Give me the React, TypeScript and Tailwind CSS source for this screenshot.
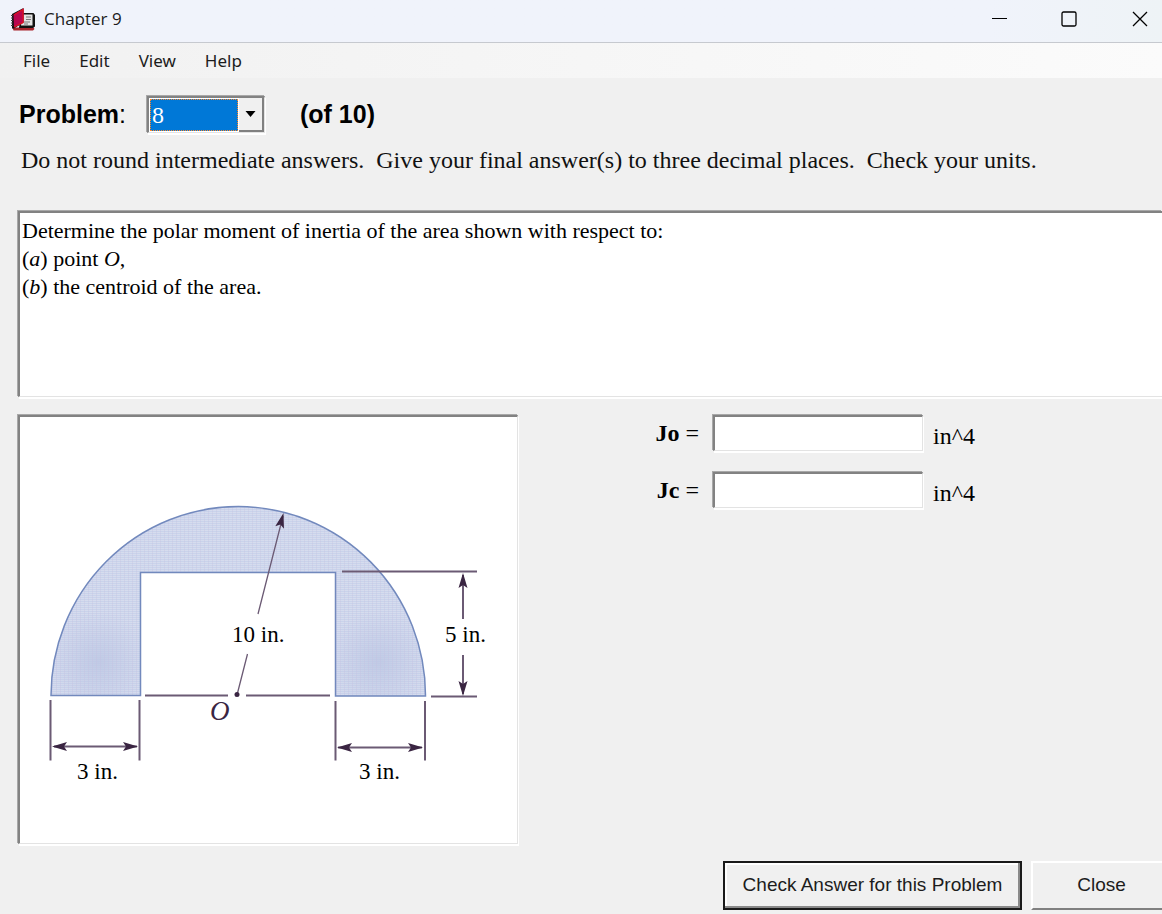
import type { ReactNode } from "react";

const MENU = ["File", "Edit", "View", "Help"];

const ANSWERS = [
  { id: "jo", label: "Jo", unit: "in^4" },
  { id: "jc", label: "Jc", unit: "in^4" },
];

const SUNKEN =
  "border-t-2 border-l-2 border-b border-[#828282] border-b-[#e3e3e3] bg-white shadow-[-1px_-1px_0_#a8a8a8,1px_2px_0_#ffffff]";

function BookIcon() {
  return (
    <svg viewBox="0 0 26 24" className="h-6 w-[26px]" aria-hidden="true">
      <path d="M1.500 20.500h21l1 1.500-1.500 1.500H2.500z" fill="#a8242c" />
      <path d="M10 6h12.500l1.500 2v11.500l-2 1.500H8z" fill="#111" />
      <path d="M12 7.500h9.500v11H10z" fill="#e4e4e4" />
      <path d="M15 10h5M15 12.500h5M13 15h6M13 17h4" stroke="#777" strokeWidth="1" />
      <path d="M1 7l11.500-6v14.500L3 21.500H1z" fill="#111" />
      <path d="M0 8.500h2M0 11h2M0 13.500h2M0 16h2M0 18.500h2" stroke="#444" />
      <path d="M2.500 7.500L12.500 1.500v14L3 20.500z" fill="#b8064e" />
      <path d="M3 8L12 2.500v13L3 20" fill="none" stroke="#e01020" strokeWidth="1.300" />
    </svg>
  );
}

function TitleBar() {
  return (
    <header className="flex h-[43px] items-center justify-between border-b border-[#c6c9cf] bg-linear-to-r from-[#f0f3fb] from-85% to-[#eef3f6] pl-[11px]">
      <div className="flex items-center gap-[7px] pb-1">
        <BookIcon />
        <h1 className="font-['Open_Sans',sans-serif] text-[17px] leading-6 text-[#1b1b1b]">Chapter 9</h1>
      </div>
      <div className="flex pb-1 text-black">
        <button aria-label="Minimize" className="flex h-9 w-[68px] items-center justify-center">
          <svg viewBox="0 0 16 16" className="h-4 w-4" fill="none" stroke="currentColor">
            <path d="M0 7.500h15" />
          </svg>
        </button>
        <button aria-label="Maximize" className="flex h-9 w-[70px] items-center justify-center">
          <svg viewBox="0 0 16 16" className="h-4 w-4" fill="none" stroke="currentColor" strokeWidth="1.300">
            <rect x="1" y="1" width="14" height="14" rx="1.500" />
          </svg>
        </button>
        <button aria-label="Close window" className="flex h-9 w-[58px] items-center justify-center pl-[14px]">
          <svg viewBox="0 0 16 16" className="h-4 w-4" fill="none" stroke="currentColor" strokeWidth="1.300">
            <path d="M1 1l14 14M15 1L1 15" />
          </svg>
        </button>
      </div>
    </header>
  );
}

function MenuBar() {
  return (
    <nav className="flex h-[35px] items-center gap-[29px] bg-linear-to-r from-[#f1f1f1] to-[#fbfbfb] pl-[23px] font-['Noto_Sans',sans-serif] text-[17px] text-[#1c1c1c]">
      {MENU.map((item) => (
        <button key={item}>{item}</button>
      ))}
    </nav>
  );
}

function ProblemPicker() {
  return (
    <div className="flex h-[39px] items-center pl-[19px] font-['Liberation_Sans',Arial,sans-serif] text-[25px] text-black">
      <label htmlFor="problem" className="w-[128px] font-bold">
        Problem<span className="font-normal">:</span>
      </label>
      <div className={`relative h-[37px] w-[118px] border-r border-r-[#e3e3e3] p-px ${SUNKEN}`}>
        <select
          id="problem"
          defaultValue="8"
          className="block h-full w-[88px] appearance-none border border-dotted border-[#ff8728] bg-[#0078d7] pl-px font-['Liberation_Serif','Times_New_Roman',serif] text-[24px] leading-7 text-white outline-none"
        >
          {Array.from({ length: 10 }, (_, i) => (
            <option key={i} value={i + 1}>
              {i + 1}
            </option>
          ))}
        </select>
        <span className="pointer-events-none absolute inset-y-0 right-0 flex w-[25px] items-center justify-center border-r-2 border-b-2 border-[#808080] bg-[#f0f0f0]">
          <svg viewBox="0 0 10 6" className="h-[6px] w-[11px]" aria-hidden="true">
            <path d="M0 0h10L5 6z" />
          </svg>
        </span>
      </div>
      <span className="pl-[35px] font-bold">(of 10)</span>
    </div>
  );
}

function Arrow({ x, y, angle }: { x: number; y: number; angle: number }) {
  return <path d="M0 0L-15 -4.500L-12 0L-15 4.500z" fill="#3a2542" transform={`translate(${x} ${y}) rotate(${angle})`} />;
}

function Note({ x, y, children }: { x: number; y: number; children: ReactNode }) {
  return (
    <text x={x} y={y} fontSize="23" fill="#000">
      {children}
    </text>
  );
}

function Figure() {
  const area = "M31 278.500A187 189 0 0 1 405.500 279H315.500V155.500H120.500V278.500Z";

  return (
    <svg
      viewBox="0 0 497 426"
      className="w-full font-['Liberation_Serif','Times_New_Roman',serif]"
      role="img"
      aria-label="Half disk of radius 10 in. with a rectangular cut-out, 5 in. high"
    >
      <defs>
        <pattern id="weave" width="4" height="4" patternUnits="userSpaceOnUse">
          <path d="M0 .5h4M0 2.500h4" stroke="#b9c8e6" strokeWidth="1" opacity=".45" />
          <path d="M.5 0v4" stroke="#c3bddd" strokeWidth="1" opacity=".3" />
        </pattern>
        <radialGradient id="shade">
          <stop offset="0" stopColor="#b4bfdf" stopOpacity=".6" />
          <stop offset="1" stopColor="#b4bfdf" stopOpacity="0" />
        </radialGradient>
        <clipPath id="area">
          <path d={area} />
        </clipPath>
      </defs>

      <path d={area} fill="#d6dcee" />
      <g clipPath="url(#area)">
        <circle cx="78" cy="245" r="52" fill="url(#shade)" />
        <circle cx="358" cy="245" r="52" fill="url(#shade)" />
      </g>
      <path d={area} fill="url(#weave)" stroke="#7289bd" strokeWidth="1.500" />

      <g stroke="#6b5a74" strokeWidth="2">
        <path d="M125 278.500H208M226 278.500H310" />
        <path d="M322 154.500H457M411 279.500H457" />
        <path d="M443 158V202M443 238V277" />
        <path d="M30.500 283V343.500M119.500 283V343.500M315.500 284V343.500M405 284V343.500" />
        <path d="M34 329.500H117M318 330.500H402" />
      </g>
      <path d="M217 278L227.500 237M238 197L263 99" stroke="#6b5a74" strokeWidth="1.300" />
      <circle cx="217" cy="277.500" r="2.500" fill="#3a2542" />

      <Arrow x={263.5} y={96} angle={-75} />
      <Arrow x={443} y={156} angle={-90} />
      <Arrow x={443} y={279} angle={90} />
      <Arrow x={32} y={329.5} angle={180} />
      <Arrow x={118} y={329.5} angle={0} />
      <Arrow x={317} y={330.5} angle={180} />
      <Arrow x={403} y={330.5} angle={0} />

      <Note x={212} y={225}>10 in.</Note>
      <Note x={425} y={225}>5 in.</Note>
      <Note x={57} y={362}>3 in.</Note>
      <Note x={339} y={362}>3 in.</Note>
      <text x="190" y="303" fontSize="27" fontStyle="italic" fill="#3a2542">
        O
      </text>
    </svg>
  );
}

function AnswerForm() {
  return (
    <form className="flex flex-col gap-[21px] font-['Liberation_Serif','Times_New_Roman',serif] text-[24px] text-black">
      {ANSWERS.map(({ id, label, unit }) => (
        <div key={id} className="flex h-9 items-center">
          <label htmlFor={id} className="w-[60px] pr-[14px] text-right font-bold whitespace-nowrap">
            {label} <span className="font-normal">=</span>
          </label>
          <input id={id} type="text" className={`h-9 w-[210px] border-r border-r-[#e3e3e3] px-1 outline-none ${SUNKEN}`} />
          <span className="pt-[6px] pl-[10px]">{unit}</span>
        </div>
      ))}
    </form>
  );
}

export default function App() {
  return (
    <div className="flex min-h-screen flex-col overflow-hidden bg-[#f0f0f0]">
      <TitleBar />
      <MenuBar />

      <main className="flex flex-1 flex-col pt-[17px]">
        <ProblemPicker />

        <p className="pt-[10px] pl-[21px] font-['Liberation_Serif','Times_New_Roman',serif] text-[24px] leading-8 whitespace-pre text-[#111]">
          Do not round intermediate answers.  Give your final answer(s) to three decimal places.  Check your units.
        </p>

        <section
          className={`mt-[35px] ml-[18px] h-[186px] pt-[4px] pl-[2px] font-['Liberation_Serif','Times_New_Roman',serif] text-[22px] leading-7 text-black ${SUNKEN}`}
        >
          <p>Determine the polar moment of inertia of the area shown with respect to:</p>
          <p>
            (<i>a</i>) point <i>O</i>,
          </p>
          <p>
            (<i>b</i>) the centroid of the area.
          </p>
        </section>

        <div className="mt-[18px] flex items-start pl-[18px]">
          <div className={`w-[500px] border-r border-r-[#e3e3e3] ${SUNKEN}`}>
            <Figure />
          </div>
          <div className="pl-[135px]">
            <AnswerForm />
          </div>
        </div>

        <footer className="mt-auto flex items-start justify-end gap-[9px] pb-[4px] font-['Liberation_Sans',Arial,sans-serif] text-[19px] text-[#1c1c1c]">
          <button className="h-[49px] w-[299px] border-2 border-[#1a1a1a] whitespace-nowrap shadow-[inset_-2px_-2px_0_#8a8a8a,inset_2px_2px_0_#ffffff]">
            Check Answer for this Problem
          </button>
          <button className="h-[49px] w-[131px] border-t-2 border-b-2 border-l-2 border-white border-b-[#808080] pl-[8px]">
            Close
          </button>
        </footer>
      </main>
    </div>
  );
}
